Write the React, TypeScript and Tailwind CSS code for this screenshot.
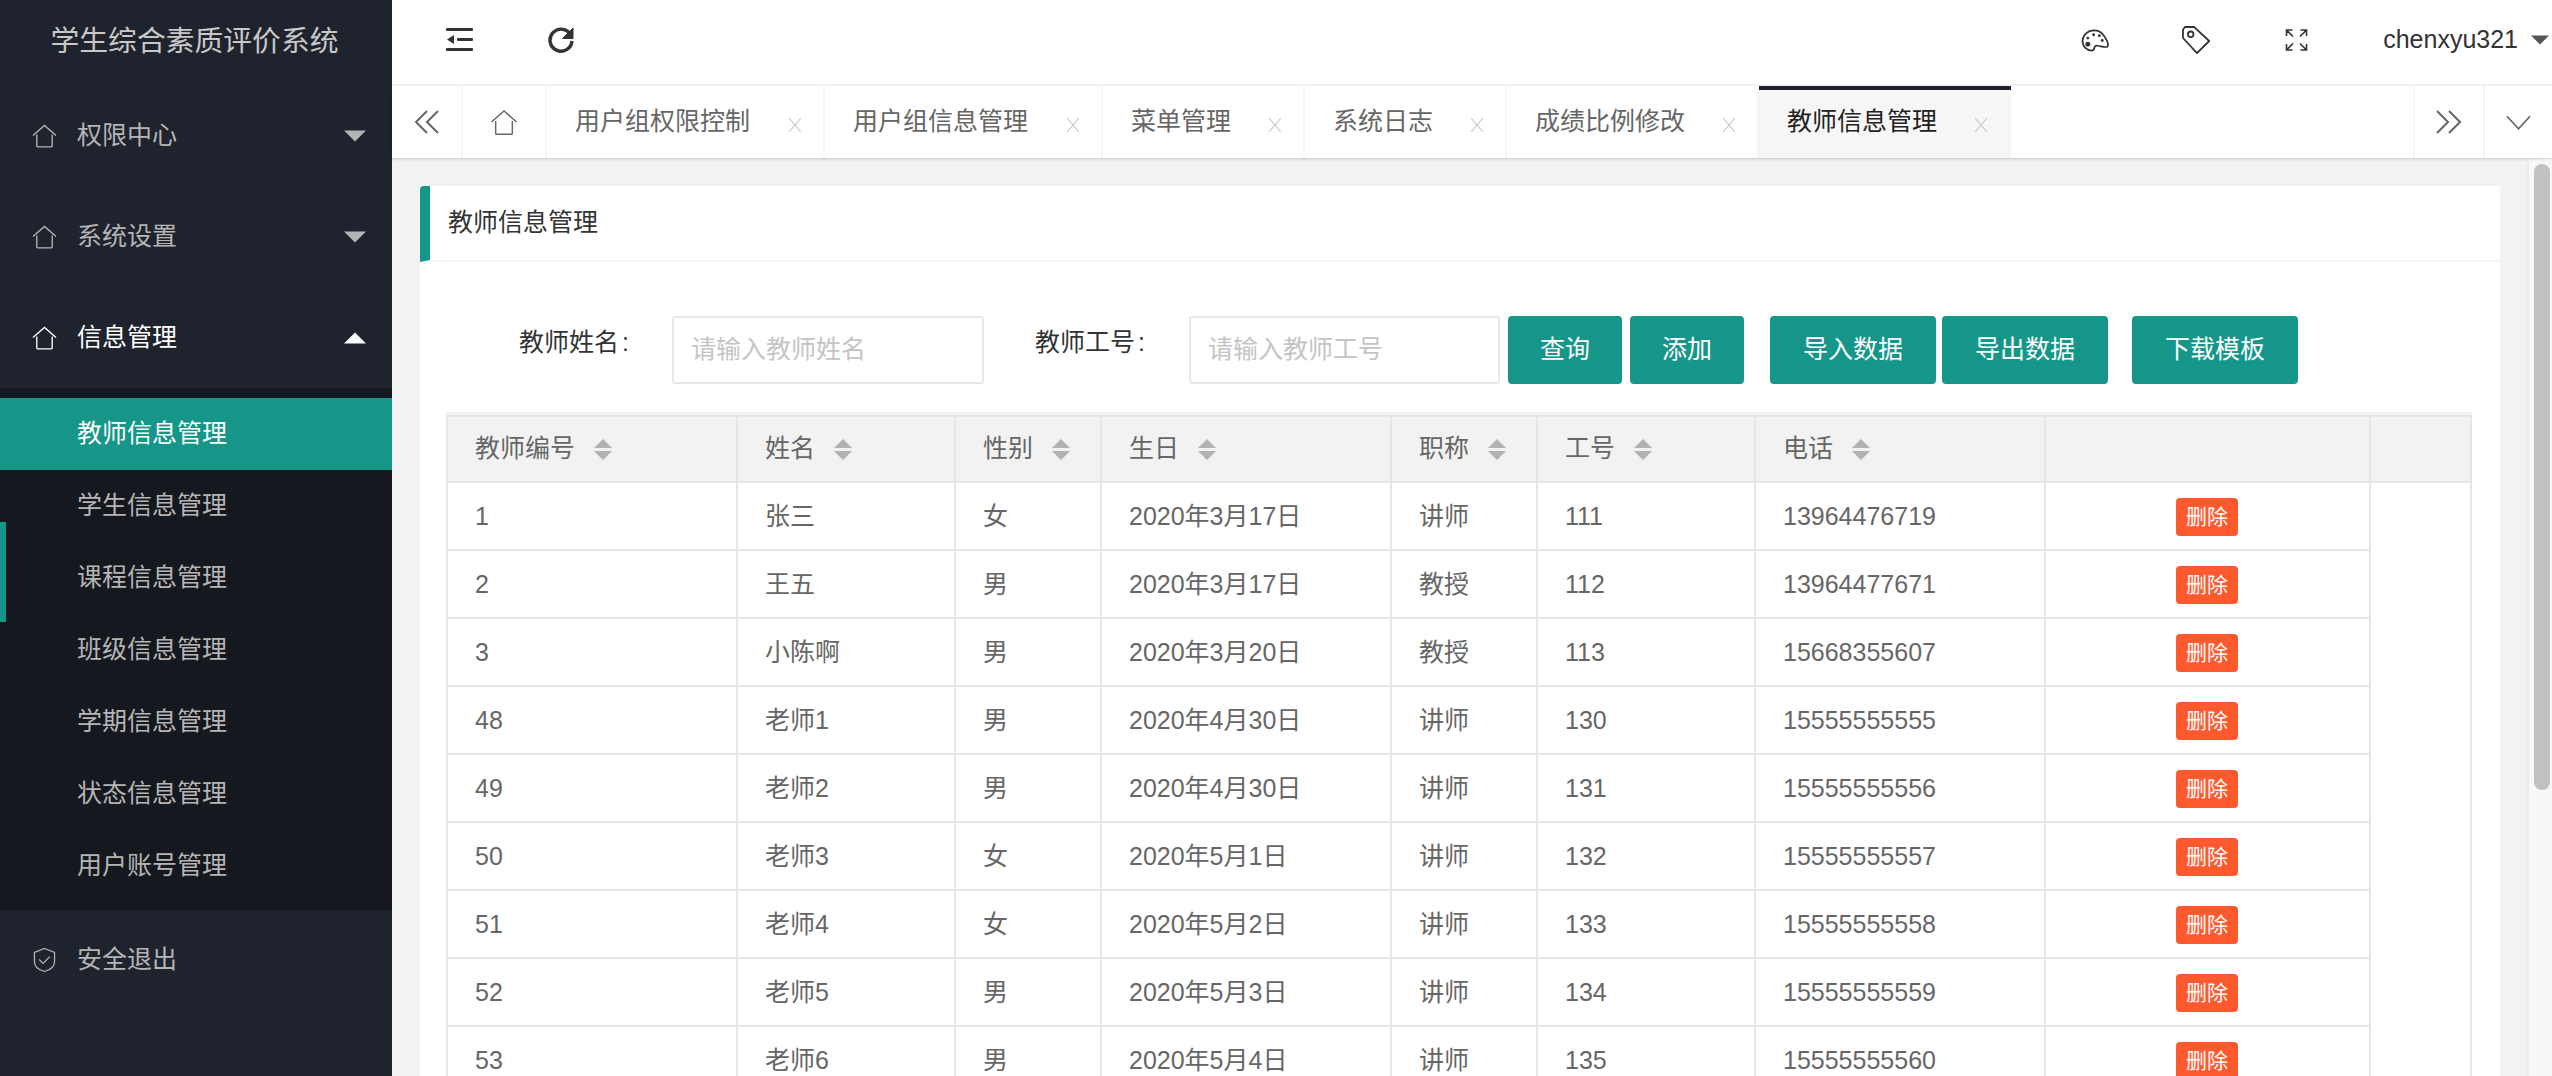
/**
 * Teacher info management page
 */
import type { ReactNode } from 'react'

const teal = 'bg-[#169689]'

function HomeIcon({ className }: { className?: string }) {
  return (
    <svg viewBox="0 0 26 24" fill="none" stroke="currentColor" strokeWidth="1.4" className={className}>
      <path d="M1 11.5 13 1l12 10.5" />
      <path d="M5 10.5V22.5a.8.8 0 0 0 .8.8H20.2a.8.8 0 0 0 .8-.8V10.5" />
    </svg>
  )
}

function Caret({ up, className }: { up?: boolean; className?: string }) {
  return (
    <svg viewBox="0 0 22 11" className={className} fill="currentColor">
      {up ? <path d="M11 0 22 11H0z" /> : <path d="M0 0h22L11 11z" />}
    </svg>
  )
}

function SortArrows() {
  return (
    <svg viewBox="0 0 18 21" className="ml-[19px] h-[21px] w-[18px] text-[#b2b2b2]" fill="currentColor">
      <path d="M9 0l9 9H0zM0 12h18l-9 9z" />
    </svg>
  )
}

function TabClose() {
  return (
    <svg viewBox="0 0 14 14" className="h-[14px] w-[14px] text-[#c6c6c6]" fill="none" stroke="currentColor" strokeWidth="1.1">
      <path d="M1 0l12 14M13 0 1 14" />
    </svg>
  )
}

const menus = ['权限中心', '系统设置']
const subMenus = ['教师信息管理', '学生信息管理', '课程信息管理', '班级信息管理', '学期信息管理', '状态信息管理', '用户账号管理']

function MenuRow({ label, icon, right, active, height }: { label: string; icon: ReactNode; right?: ReactNode; active?: boolean; height: string }) {
  return (
    <div className={`flex items-center pl-[32px] pr-[26px] ${height} ${active ? 'text-white' : 'text-[#b5b5b5]'}`}>
      <span className="w-[45px]">{icon}</span>
      <span className="flex-1">{label}</span>
      {right}
    </div>
  )
}

function Sidebar() {
  return (
    <aside className="flex w-[392px] shrink-0 flex-col bg-[#1f232d] text-[25px]">
      <div className="flex h-[84px] items-center justify-center border-b border-[#1b1f28] pr-[3px] pt-[1px] text-[28.8px] text-[#c8c8c8]">学生综合素质评价系统</div>
      <div className="pt-[1px]">
        {menus.map((m) => (
          <MenuRow
            key={m}
            label={m}
            height="h-[101px]"
            icon={<HomeIcon className="h-[24px] w-[25px]" />}
            right={<Caret className="h-[12px] w-[22px] text-[#b5b5b5]" />}
          />
        ))}
        <MenuRow
          label="信息管理"
          active
          height="h-[101px]"
          icon={<HomeIcon className="h-[24px] w-[25px]" />}
          right={<Caret up className="h-[12px] w-[22px] text-white" />}
        />
      </div>
      <div className="relative bg-[#16181f] pb-[8px] pt-[10px] text-[#b5b5b5]">
        <div className={`absolute left-0 top-[134px] h-[100px] w-[6px] ${teal}`} />
        {subMenus.map((s, i) => (
          <div key={s} className={`flex h-[72px] items-center pl-[77px] ${i === 0 ? `${teal} text-white` : ''}`}>
            {s}
          </div>
        ))}
      </div>
      <div className="flex h-[100px] items-center pl-[33px] text-[#b5b5b5]">
        <svg viewBox="0 0 24 26" fill="none" stroke="currentColor" strokeWidth="1.3" className="mr-[21px] h-[26px] w-[23px]">
          <path d="M12 1 22.5 5v9.5c0 5-4.5 8.800-10.500 10.500C6 23.300 1.500 19.500 1.500 14.500V5z" />
          <path d="M6.500 12.500l4 4 7-7" />
        </svg>
        安全退出
      </div>
    </aside>
  )
}

function TopBar() {
  return (
    <header className="flex h-[86px] shrink-0 items-center border-b-2 border-[#f6f6f6] bg-white text-[#333] pb-[4px]">
      <svg viewBox="0 0 27 24" className="ml-[54px] h-[24px] w-[27px]" fill="currentColor">
        <rect x="0" y="0" width="27" height="3" rx="1" />
        <rect x="0" y="20" width="27" height="3" rx="1" />
        <rect x="11" y="10" width="16" height="3" rx="1" />
        <path d="M1 11.500 8 7v9z" />
      </svg>
      <svg viewBox="0 0 28 28" fill="none" stroke="currentColor" className="ml-[74px] h-[28px] w-[28px]">
        <path d="M24 9.500A11 11 0 1 0 25 15" strokeWidth="3.400" />
        <path d="M26 2v10.500H15.500z" fill="currentColor" />
      </svg>
      <div className="flex-1" />
      <svg viewBox="0 0 30 24" fill="none" stroke="currentColor" strokeWidth="1.800" className="h-[23px] w-[29px]">
        <path d="M14 1.500C6.500 1.500 1.500 6.500 1.500 12.500s4.500 10 9.500 10c2.500 0 2.500-2 3-3.500s2-2 4-1.500c3 .5 7 2 9.500 1 1.500-2.500-1.500-8.500-4.500-12.500C20.500 3 17.500 1.500 14 1.500z" />
        <circle cx="7" cy="16" r="2.600" fill="currentColor" stroke="none" />
        <circle cx="7" cy="9.500" r="1.500" fill="currentColor" stroke="none" />
        <circle cx="13" cy="6" r="1.500" fill="currentColor" stroke="none" />
        <circle cx="19" cy="7" r="1.500" fill="currentColor" stroke="none" />
        <circle cx="22" cy="12" r="1.500" fill="currentColor" stroke="none" />
      </svg>
      <svg viewBox="0 0 28 28" fill="none" stroke="currentColor" strokeWidth="1.800" strokeLinejoin="round" className="ml-[72px] h-[28px] w-[28px]">
        <path d="M1 3.500 3 1l9-.2L27.200 15 15 27.200 1 12z" />
        <circle cx="8.700" cy="8.300" r="2.800" />
      </svg>
      <svg viewBox="0 0 22 22" fill="none" stroke="currentColor" strokeWidth="1.600" className="ml-[75px] h-[22px] w-[23px]">
        <path d="M1 7V1h6M1 1l6.500 6.500M15 1h6v6M21 1l-6.500 6.500M1 15v6h6M1 21l6.500-6.500M21 15v6h-6M21 21l-6.500-6.500" />
      </svg>
      <span className="ml-[75px] text-[25px]">chenxyu321</span>
      <Caret className="ml-[13px] mr-[3px] h-[10px] w-[18px] text-[#555]" />
    </header>
  )
}

const tabs = [
  { label: '用户组权限控制', width: 'w-[278px]' },
  { label: '用户组信息管理', width: 'w-[278px]' },
  { label: '菜单管理', width: 'w-[202px]' },
  { label: '系统日志', width: 'w-[202px]' },
  { label: '成绩比例修改', width: 'w-[252px]' },
]

function TabBar() {
  return (
    <div className="z-10 flex h-[72px] shrink-0 bg-white text-[25px] text-[#666] shadow-[0_1px_3px_rgba(0,0,0,0.18)]">
      <div className="flex w-[71px] items-center justify-center border-r-2 border-[#f6f6f6]">
        <svg viewBox="0 0 26 24" fill="none" stroke="#666" strokeWidth="2" className="h-[24px] w-[26px]">
          <path d="M13 1 2 12l11 11M24 1 13 12l11 11" />
        </svg>
      </div>
      <div className="flex w-[84px] items-center justify-center border-r-2 border-[#f6f6f6]">
        <HomeIcon className="h-[25px] w-[28px] text-[#666]" />
      </div>
      {tabs.map((t) => (
        <div key={t.label} className={`flex ${t.width} items-center justify-between border-r-2 border-[#f6f6f6] pl-[28px] pr-[21px]`}>
          <span>{t.label}</span>
          <span className="pt-[6px]"><TabClose /></span>
        </div>
      ))}
      <div className="flex w-[252px] items-center justify-between border-t-[4px] border-[#1f232d] bg-[#f6f6f6] pl-[28px] pr-[23px] text-[#222]">
        <span className="pb-[4px]">教师信息管理</span>
        <span className="pt-[2px]"><TabClose /></span>
      </div>
      <div className="flex-1" />
      <div className="flex w-[72px] items-center justify-center border-x-2 border-[#f6f6f6]">
        <svg viewBox="0 0 26 24" fill="none" stroke="#666" strokeWidth="2" className="h-[24px] w-[26px]">
          <path d="M1 1l11 11L1 23M13 1l11 11-11 11" />
        </svg>
      </div>
      <div className="flex w-[67px] items-center justify-center">
        <svg viewBox="0 0 26 15" fill="none" stroke="#666" strokeWidth="1.800" className="h-[15px] w-[25px]">
          <path d="M1 1l12 13L25 1" />
        </svg>
      </div>
    </div>
  )
}

const headers = [
  { label: '教师编号', width: 'w-[292px]' },
  { label: '姓名', width: 'w-[218px]' },
  { label: '性别', width: 'w-[146px]' },
  { label: '生日', width: 'w-[290px]' },
  { label: '职称', width: 'w-[146px]' },
  { label: '工号', width: 'w-[218px]' },
  { label: '电话', width: 'w-[290px]' },
]

const rows = [
  ['1', '张三', '女', '2020年3月17日', '讲师', '111', '13964476719'],
  ['2', '王五', '男', '2020年3月17日', '教授', '112', '13964477671'],
  ['3', '小陈啊', '男', '2020年3月20日', '教授', '113', '15668355607'],
  ['48', '老师1', '男', '2020年4月30日', '讲师', '130', '15555555555'],
  ['49', '老师2', '男', '2020年4月30日', '讲师', '131', '15555555556'],
  ['50', '老师3', '女', '2020年5月1日', '讲师', '132', '15555555557'],
  ['51', '老师4', '女', '2020年5月2日', '讲师', '133', '15555555558'],
  ['52', '老师5', '男', '2020年5月3日', '讲师', '134', '15555555559'],
  ['53', '老师6', '男', '2020年5月4日', '讲师', '135', '15555555560'],
]

const btn = `flex h-[68px] items-center justify-center rounded-[4px] ${teal} pb-[1px] text-white`

function TeacherTable() {
  return (
    <table className="mt-[28px] w-[2026px] table-fixed border-separate border-spacing-0 border-t-[3px] border-[#f2f2f2] text-[25px] text-[#666]">
      <thead>
        <tr className="h-[68px] bg-[#f2f2f2]">
          {headers.map((h, i) => (
            <th key={h.label} className={`${h.width} border-y-2 border-r-2 border-[#e6e6e6] pl-[27px] text-left font-normal ${i === 0 ? 'border-l-2' : ''}`}>
              <div className="flex items-center">
                {h.label}
                <SortArrows />
              </div>
            </th>
          ))}
          <th className="w-[325px] border-y-2 border-r-2 border-[#e6e6e6]" />
          <th className="w-[101px] border-y-2 border-r-2 border-[#e6e6e6]" />
        </tr>
      </thead>
      <tbody>
        {rows.map((r) => (
          <tr key={r[0]} className="h-[68px]">
            {r.map((c, i) => (
              <td key={i} className={`border-b-2 border-r-2 border-[#e6e6e6] pl-[27px] pt-[2px] ${i === 0 ? 'border-l-2' : ''}`}>
                {c}
              </td>
            ))}
            <td className="border-b-2 border-r-2 border-[#e6e6e6] pr-[1px] text-center">
              <button className="h-[38px] w-[62px] rounded-[4px] bg-[#ff5a2d] text-[21px] leading-[38px] text-white">删除</button>
            </td>
            <td className="border-r-2 border-[#e6e6e6]" />
          </tr>
        ))}
      </tbody>
    </table>
  )
}

function FilterForm() {
  return (
    <div className="flex h-[68px] items-center text-[25px]">
      <label className="ml-[73px] w-[110px] pb-[14px] text-[#333]">教师姓名<span className="ml-[3px]">:</span></label>
      <input placeholder="请输入教师姓名" className="ml-[43px] h-[68px] w-[312px] rounded-[3px] border-2 border-[#e8e8e8] pb-[2px] pl-[17px] placeholder:text-[#c4c4c4]" />
      <label className="ml-[51px] w-[110px] pb-[14px] text-[#333]">教师工号<span className="ml-[3px]">:</span></label>
      <input placeholder="请输入教师工号" className="ml-[44px] h-[68px] w-[311px] rounded-[3px] border-2 border-[#e8e8e8] pb-[2px] pl-[17px] placeholder:text-[#c4c4c4]" />
      <button className={`${btn} ml-[8px] w-[114px]`}>查询</button>
      <button className={`${btn} ml-[8px] w-[114px]`}>添加</button>
      <button className={`${btn} ml-[26px] w-[166px]`}>导入数据</button>
      <button className={`${btn} ml-[6px] w-[166px]`}>导出数据</button>
      <button className={`${btn} ml-[24px] w-[166px]`}>下载模板</button>
    </div>
  )
}

export default function App() {
  return (
    <div className="flex h-[1076px] w-[2552px] overflow-hidden font-['Liberation_Sans','Noto_Sans_CJK_SC',sans-serif]">
      <Sidebar />
      <main className="flex min-w-0 flex-1 flex-col">
        <TopBar />
        <TabBar />
        <div className="flex min-h-0 flex-1 bg-[#f2f2f2]">
          <div className="min-w-0 flex-1 pl-[28px] pr-[27px] pt-[28px]">
            <div className="h-[1000px] rounded-[4px] bg-white">
              <div className="flex h-[76px] items-center rounded-tl-[4px] border-b-2 border-l-[10px] border-[#f6f6f6] border-l-[#169689] pl-[18px] text-[25px] text-[#333]">
                教师信息管理
              </div>
              <div className="pl-[26px] pt-[54px]">
                <FilterForm />
                <TeacherTable />
              </div>
            </div>
          </div>
          <div className="w-[25px] shrink-0 border-l-2 border-[#ececec] bg-[#f8f8f8] pl-[5px] pt-[6px]">
            <div className="h-[626px] w-[16px] rounded-full bg-[#c1c1c1]" />
          </div>
        </div>
      </main>
    </div>
  )
}
